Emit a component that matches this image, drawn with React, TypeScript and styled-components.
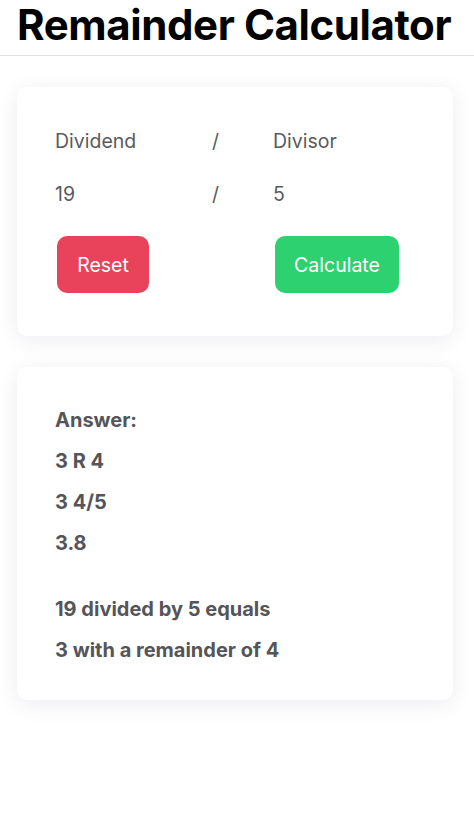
import React, { useState } from 'react'
import styled, { createGlobalStyle } from 'styled-components'

const GlobalStyle = createGlobalStyle`
  html, body {
    margin: 0;
    padding: 0;
    background: #ffffff;
    font-family: Inter, "Noto Sans", "Liberation Sans", sans-serif;
  }
`

const Page = styled.div`
  width: 474px;
  min-height: 826px;
  background: #ffffff;
`

const Header = styled.header`
  border-bottom: 1px solid #dfe1e5;
  padding: 0 17px;
  height: 56px;
  box-sizing: border-box;
`

const Title = styled.h1`
  margin: 0;
  padding-top: 1px;
  font-size: 42px;
  line-height: 48px;
  font-weight: 700;
  color: #000;
  letter-spacing: -0.4px;
  white-space: nowrap;
`

const Main = styled.main`
  display: flex;
  flex-direction: column;
  gap: 31px;
  padding: 31px 21px 0 17px;
`

const Card = styled.section<{ $pad: string }>`
  background: #fff;
  border-radius: 10px;
  box-shadow: 0 4px 22px rgba(20, 30, 80, 0.08);
  padding: ${p => p.$pad};
`

const Grid = styled.div`
  display: grid;
  grid-template-columns: 157px 61px 1fr;
  grid-auto-rows: 53px;
  align-items: center;
  font-size: 19.5px;
  color: #5a5a5e;
`

const Actions = styled.div`
  display: grid;
  grid-template-columns: 218px 1fr;
  margin-top: 16px;
  padding-left: 2px;
`

const Button = styled.button<{ $color: string; $w: number }>`
  width: ${p => p.$w}px;
  height: 57px;
  border: none;
  border-radius: 10px;
  background: ${p => p.$color};
  color: #fff;
  font-family: inherit;
  font-size: 19.5px;
  cursor: pointer;
`

const Answer = styled.div`
  font-size: 20px;
  font-weight: 700;
  line-height: 41px;
  color: #555559;
`

const Spacer = styled.div`
  height: 25px;
`

export default function App() {
  const [dividend, setDividend] = useState(19)
  const [divisor, setDivisor] = useState(5)
  const q = Math.floor(dividend / divisor)
  const r = dividend % divisor

  return (
    <Page>
      <GlobalStyle />
      <Header>
        <Title>Remainder Calculator</Title>
      </Header>
      <Main>
        <Card $pad="27px 38px 43px 38px">
          <Grid>
            <span>Dividend</span>
            <span>/</span>
            <span>Divisor</span>
            <span>{dividend}</span>
            <span>/</span>
            <span>{divisor}</span>
          </Grid>
          <Actions>
            <Button $color="#e9435c" $w={92} onClick={() => { setDividend(19); setDivisor(5) }}>
              Reset
            </Button>
            <Button $color="#2dd16f" $w={124}>Calculate</Button>
          </Actions>
        </Card>
        <Card $pad="33px 38px 29px 38px">
          <Answer>
            <div>Answer:</div>
            <div>{q} R {r}</div>
            <div>{q} {r}/{divisor}</div>
            <div>{dividend / divisor}</div>
            <Spacer />
            <div>{dividend} divided by {divisor} equals</div>
            <div>{q} with a remainder of {r}</div>
          </Answer>
        </Card>
      </Main>
    </Page>
  )
}
